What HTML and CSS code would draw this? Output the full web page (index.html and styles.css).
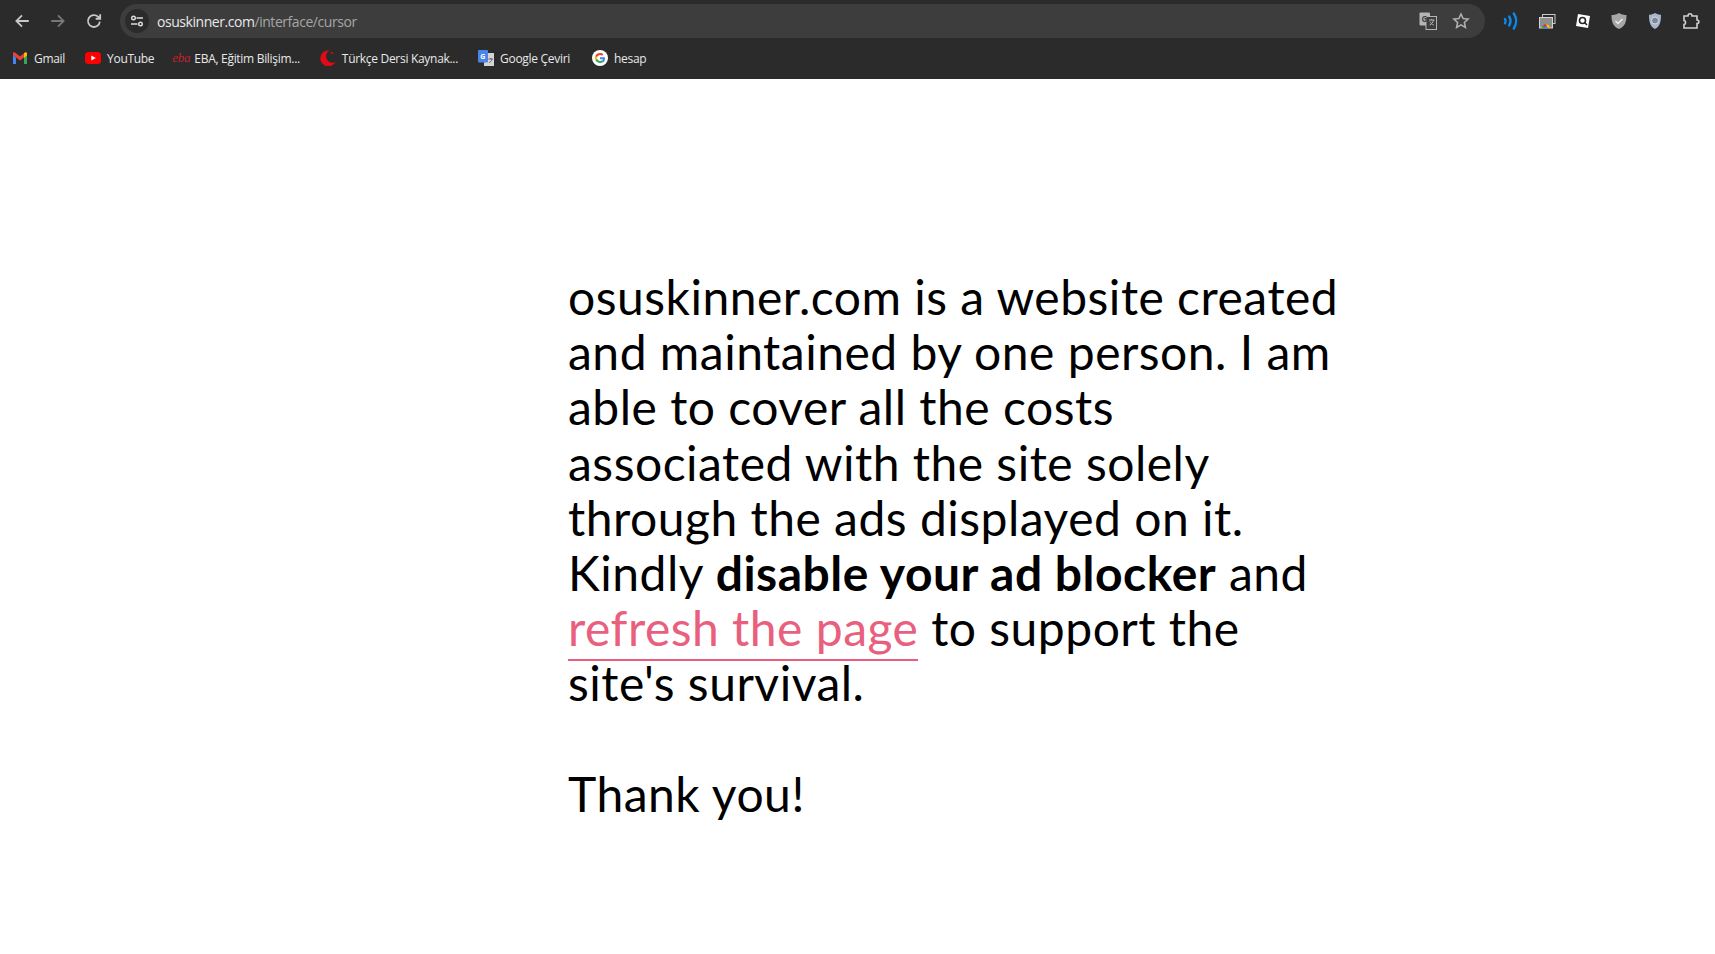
FILE: index.html
```html
<!DOCTYPE html>
<html lang="en">
<head>
    <meta charset="UTF-8">
    <title>osuskinner.com</title>
    <link rel="stylesheet" href="styles.css">
</head>
<body>
    <!-- Browser toolbar -->
    <header class="browser">
        <div class="toolbar">
            <svg class="nav-icon nav-back" viewBox="0 0 16 16"><path d="M14 8H3M8 3 3 8l5 5"/></svg>
            <svg class="nav-icon nav-forward" viewBox="0 0 16 16"><path d="M2 8h11M8 3l5 5-5 5"/></svg>
            <svg class="nav-icon nav-reload" viewBox="0 0 16 16"><path d="M13.200 8.600A5.300 5.300 0 1 1 11.600 4.200L13.500 6M13.500 2v4h-4"/></svg>
            <div class="omnibox">
                <span class="site-chip">
                    <svg viewBox="0 0 16 16"><path d="M7.500 5H14M2 11h6.500"/><circle cx="4.500" cy="5" r="1.800"/><circle cx="11.500" cy="11" r="1.800"/></svg>
                </span>
                <span class="url"><span class="url-host">osuskinner.com</span>/interface/cursor</span>
                <span class="omni-right">
                    <svg class="omni-translate" viewBox="0 0 18 18">
                        <rect x="0.500" y="0.500" width="10.500" height="13" rx="1" fill="#b5b5b5"/>
                        <rect x="7" y="4.500" width="10.500" height="13" fill="#3d3d3d" stroke="#b5b5b5"/>
                        <text x="2.500" y="10" class="translate-g">G</text>
                        <path d="M10 8h5.500M12.700 7v1M14.500 8c-.5 3-2 4-3.800 5M11 9.500c.5 1.500 2 3 3.800 3.500" fill="none" stroke="#b5b5b5"/>
                    </svg>
                    <svg class="omni-star" viewBox="0 0 16 16"><path d="m8 1.800 1.900 4 4.400.5-3.300 3 .9 4.400L8 11.500l-3.900 2.200.9-4.400-3.300-3 4.400-.5z"/></svg>
                </span>
            </div>
            <div class="extensions">
                <svg class="ext" viewBox="0 0 18 18"><g fill="none" stroke="#0a8af0" stroke-width="2.400" stroke-linecap="round"><path d="M3 7c.8 1.300.8 3 0 4.300"/><path d="M7.200 4.500c1.700 3 1.700 6 0 9"/><path d="M11.800 1.500c3 4.500 3 10.500 0 15"/></g></svg>
                <svg class="ext" viewBox="0 0 18 18">
                    <rect x="4.500" y="2.500" width="12.500" height="9" fill="#2b2b2b" stroke="#c9c9c9"/>
                    <rect x="1.500" y="5.500" width="13" height="10.500" fill="#8e8e8e" stroke="#d4d4d4"/>
                    <path d="M4.200 16a3.800 3.800 0 0 1 7.600 0z" fill="#d93025"/>
                    <path d="M8 12.200a3.800 3.800 0 0 1 3.800 3.800H9.500z" fill="#f9c80e"/>
                    <path d="M4.200 16a3.800 3.800 0 0 1 1.200-2.800l1.600 2.800z" fill="#34a853"/>
                    <circle cx="8" cy="15.500" r="1.500" fill="#4285f4"/>
                </svg>
                <svg class="ext" viewBox="0 0 18 18">
                    <path d="M4 2l12 2-2 12-12-2z" fill="#fff"/>
                    <circle cx="8.500" cy="8.500" r="3" fill="none" stroke="#222" stroke-width="1.600"/>
                    <path d="m10.500 10.500 2.500 2.500" stroke="#222" stroke-width="1.600"/>
                </svg>
                <svg class="ext" viewBox="0 0 18 18">
                    <path d="M9 1c2.500 1.500 5 2 7.500 2 0 7-1.500 11.500-7.500 14C3 14.500 1.500 10 1.500 3 4 3 6.500 2.500 9 1z" fill="#a6a6a6"/>
                    <path d="m5.500 9 2.500 2.500 4.500-4.500" fill="none" stroke="#eee" stroke-width="1.500"/>
                </svg>
                <svg class="ext" viewBox="0 0 18 18">
                    <path d="M9 1c2 1.200 4 1.800 6 1.800 0 7-1 11.700-6 14.200C4 14.500 3 9.800 3 2.800 5 2.800 7 2.200 9 1z" fill="#a8b6cc"/>
                    <circle cx="9" cy="8.500" r="3.500" fill="#7d8796" stroke="#d5dbe4"/>
                </svg>
                <svg class="ext ext-puzzle" viewBox="0 0 18 18"><path d="M2 4h4c0-3 4-3 4 0h5v4c2.500 0 2.500 3.500 0 3.500V16H2v-3.500c2 0 2-4 0-4z"/></svg>
            </div>
        </div>
        <nav class="bookmarks">
            <a class="bookmark">
                <svg viewBox="0 0 16 16">
                    <path d="M1 4.500V14h3V7.500z" fill="#4285f4"/>
                    <path d="M15 4.500V14h-3V7.500z" fill="#34a853"/>
                    <path d="M1 3.500c0-1 1-1.500 2-1l5 4 5-4-1 5-4 3-7-5.500z" fill="#ea4335"/>
                    <path d="M12 3.300 13 2.500c1-.5 2 0 2 1v2l-3 2.500z" fill="#fbbc04"/>
                </svg>
                Gmail
            </a>
            <a class="bookmark">
                <svg viewBox="0 0 16 16"><rect y="2" width="16" height="12" rx="3.500" fill="#f00"/><path d="M6.300 5.500v5L10.800 8z" fill="#fff"/></svg>
                YouTube
            </a>
            <a class="bookmark bookmark-eba">
                <span class="eba-logo">eba</span>
                EBA, Eğitim Bilişim...
            </a>
            <a class="bookmark">
                <svg viewBox="0 0 16 16"><path d="M9.500 0.500a8 8 0 1 0 6 11.500 6.300 6.300 0 1 1-6-11.500z" fill="#e30a17"/><circle cx="12" cy="3" r="1" fill="#e30a17"/></svg>
                Türkçe Dersi Kaynak...
            </a>
            <a class="bookmark">
                <svg viewBox="0 0 16 16">
                    <rect x="6" y="3" width="10" height="13" fill="#d5d5d5"/>
                    <rect y="0" width="10" height="12.500" rx="1" fill="#4a86e8"/>
                    <text x="2.300" y="9" class="translate-mini">G</text>
                    <path d="M10.500 9h4.500M12.700 8v1M14 9c-.3 2-1.500 3-2.800 3.500" fill="none" stroke="#666"/>
                </svg>
                Google Çeviri
            </a>
            <a class="bookmark bookmark-hesap">
                <svg viewBox="0 0 16 16">
                    <circle cx="8" cy="8" r="8" fill="#fff"/>
                    <path d="M13 8.300c0-.4 0-.7-.1-1.100H8v2.100h2.900c-.1.700-.5 1.200-1.100 1.600l1.700 1.300c1-.9 1.500-2.300 1.500-3.900z" fill="#4285f4"/>
                    <path d="M8 13c1.400 0 2.600-.5 3.500-1.300l-1.700-1.300c-.5.300-1.100.5-1.800.5-1.300 0-2.500-.9-2.900-2.100L3.300 10.100C4.100 11.800 5.900 13 8 13z" fill="#34a853"/>
                    <path d="M5.100 8.800C4.900 8.300 4.900 7.700 5.100 7.200L3.300 5.900C2.600 7.200 2.600 8.800 3.300 10.100z" fill="#fbbc04"/>
                    <path d="M8 5c.8 0 1.500.3 2 .8l1.500-1.500C10.600 3.500 9.400 3 8 3 5.900 3 4.100 4.200 3.300 5.900l1.800 1.300C5.500 6 6.700 5 8 5z" fill="#ea4335"/>
                </svg>
                hesap
            </a>
        </nav>
    </header>

    <!-- Ad blocker notice -->
    <main class="page">
        <p class="notice">
            osuskinner.com is a website created<br>
            and maintained by one person. I am<br>
            able to cover all the costs<br>
            associated with the site solely<br>
            through the ads displayed on it.<br>
            Kindly <strong>disable your ad blocker</strong> and<br>
            <a class="refresh">refresh the page</a> to support the<br>
            site's survival.<br>
            <br>
            Thank you!
        </p>
    </main>
</body>
</html>
```
FILE: styles.css
```css
body {
    margin: 0;
    background-color: #fff;
    font-family: "Lato", sans-serif;
    height: 954px;
    overflow: hidden;
}
.browser {
    height: 79px;
    background-color: #2b2b2b;
    font-family: "Open Sans", sans-serif;
    color: #e8e8e8;
}
.toolbar {
    display: flex;
    align-items: center;
    height: 42px;
    padding-left: 13px;
}
.nav-icon {
    width: 18px;
    height: 18px;
    margin-right: 18px;
    fill: none;
    stroke: #c8c8c8;
    stroke-width: 1.600;
}
.nav-forward {
    stroke: #777;
}
.nav-reload {
    margin-right: 17px;
}
.omnibox {
    display: flex;
    align-items: center;
    width: 1365px;
    height: 34px;
    border-radius: 17px;
    background-color: #3d3d3d;
}
.site-chip {
    display: flex;
    align-items: center;
    justify-content: center;
    width: 24px;
    height: 24px;
    margin-left: 5px;
    border-radius: 50%;
    background-color: #2b2b2b;
}
.site-chip svg {
    width: 16px;
    height: 16px;
    fill: none;
    stroke: #dedede;
    stroke-width: 1.400;
}
.url {
    margin-left: 8px;
    font-size: 14px;
    letter-spacing: -0.45px;
    color: #a6a6a6;
}
.url-host {
    color: #e8e8e8;
}
.omni-right {
    display: flex;
    align-items: center;
    gap: 15px;
    margin-left: auto;
    margin-right: 15px;
}
.omni-translate {
    width: 18px;
    height: 18px;
}
.translate-g {
    font-size: 8px;
    font-weight: 700;
    fill: #444;
}
.omni-star {
    width: 18px;
    height: 18px;
    fill: none;
    stroke: #b0b0b0;
    stroke-width: 1.400;
}
.extensions {
    display: flex;
    align-items: center;
    gap: 18px;
    margin-left: 17px;
}
.ext {
    width: 18px;
    height: 18px;
}
.ext-puzzle {
    fill: none;
    stroke: #d0d0d0;
    stroke-width: 1.600;
}
.bookmarks {
    display: flex;
    align-items: center;
    gap: 20px;
    height: 32px;
    padding-left: 12px;
}
.bookmark {
    display: flex;
    align-items: center;
    gap: 6px;
    font-size: 12px;
    letter-spacing: -0.3px;
    white-space: nowrap;
}
.bookmark svg {
    width: 16px;
    height: 16px;
}
.bookmark-eba {
    margin-left: -2px;
}
.bookmark-hesap {
    margin-left: 2px;
}
.translate-mini {
    font-size: 7px;
    font-weight: 700;
    fill: #fff;
}
.eba-logo {
    width: 16px;
    font-family: "Liberation Serif", serif;
    font-style: italic;
    font-size: 13px;
    color: #c8202a;
}
.page {
    padding: 190px 0 0 568px;
}
.notice {
    margin: 0;
    font-size: 48px;
    line-height: 55.200px;
    letter-spacing: 0.5px;
    color: #000;
    white-space: nowrap;
}
.notice strong {
    font-weight: 700;
}
.refresh {
    padding-bottom: 3px;
    color: #e8607e;
    border-bottom: 2px solid #e8607e;
}
```
